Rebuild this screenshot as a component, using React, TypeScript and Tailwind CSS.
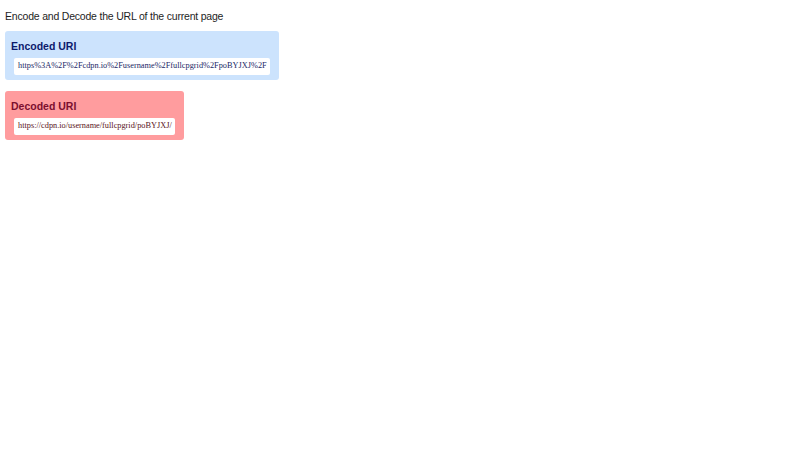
import React from 'react';

const href = 'https://cdpn.io/username/fullcpgrid/poBYJXJ/';

function UriCard({
  title,
  value,
  tone,
}: {
  title: string;
  value: string;
  tone: 'blue' | 'red';
}) {
  const box = tone === 'blue' ? 'bg-[#cce3fd]' : 'bg-[#ff9c9e]';
  const head = tone === 'blue' ? 'text-[#0c1a6c]' : 'text-[#7c0f2f]';
  const text = tone === 'blue' ? 'text-[#1a1f66]' : 'text-[#5a1322]';
  return (
    <div className={`${box} flex w-fit flex-col rounded-[3px] px-[6px] pt-[8px] pb-[5px]`}>
      <h2 className={`${head} text-[10.5px] leading-[14px] font-bold`}>{title}</h2>
      <div className="mx-[3px] mt-[5px] flex h-[17px] items-center rounded-[2px] bg-white pr-[3px] pl-[4px]">
        <span className={`${text} font-['Liberation_Serif',serif] text-[8.3px] whitespace-nowrap`}>
          {value}
        </span>
      </div>
    </div>
  );
}

export default function App() {
  return (
    <div className="flex min-h-[450px] flex-col gap-[11px] bg-white px-[5px] pt-[9px] font-['Liberation_Sans',Arial,sans-serif]">
      <p className="-mb-[3px] text-[10.5px] leading-[14px] tracking-[-0.2px] text-[#1e1e1e]">
        Encode and Decode the URL of the current page
      </p>
      <UriCard title="Encoded URI" value={encodeURIComponent(href)} tone="blue" />
      <UriCard title="Decoded URI" value={href} tone="red" />
    </div>
  );
}
